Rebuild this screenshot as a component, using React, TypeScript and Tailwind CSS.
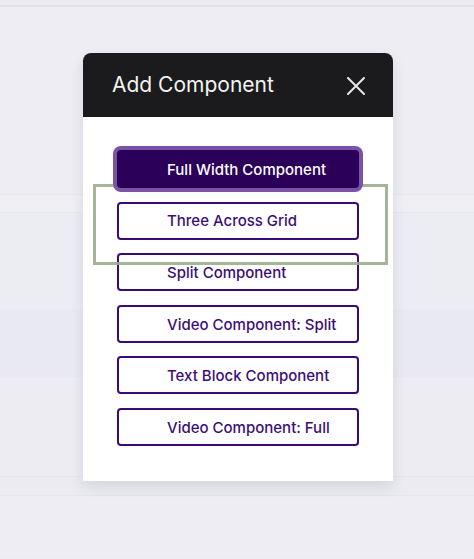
import React from 'react';

const items = [
  'Full Width Component',
  'Three Across Grid',
  'Split Component',
  'Video Component: Split',
  'Text Block Component',
  'Video Component: Full',
];

export default function App() {
  return (
    <div
      className="relative h-[559px] w-full overflow-hidden bg-[#ececf2]"
      style={{ fontFamily: 'Inter, "Noto Sans", sans-serif' }}
    >
      {/* page behind the overlay */}
      <div className="flex flex-col">
        <div className="h-[5px]" />
        <div className="h-[2px] bg-[#e0e0e8]" />
        <div className="h-[187px] bg-[#ededf3]" />
        <div className="h-[19px] border-y border-[#e6e6ed] bg-[#efeff4]" />
        <div className="h-[96px] bg-[#ececf3]" />
        <div className="h-[68px] bg-[#e8e9f1]" />
        <div className="h-[99px] bg-[#ececf2]" />
        <div className="h-[20px] border-y border-[#e5e5ec] bg-[#ebebf1]" />
        <div className="h-[62px] bg-[#ededf3]" />
      </div>

      {/* modal */}
      <div className="absolute left-[83px] top-[53px] w-[310px] rounded-t-[8px] bg-white shadow-[0_6px_14px_rgba(60,60,90,0.12)]">
        <div className="flex h-[64px] items-center justify-between rounded-t-[8px] bg-[#1b1b1d] pl-[29px] pr-[28px]">
          <h2 className="text-[21px] font-normal text-[#f3f3f3]">Add Component</h2>
          <svg width="18" height="18" viewBox="0 0 18 18" className="mt-[1px]">
            <path d="M1 1 L17 17 M17 1 L1 17" stroke="#e8e8e8" strokeWidth="2" strokeLinecap="round" />
          </svg>
        </div>
        <div className="relative flex flex-col gap-[13.6px] px-[34px] pb-[35px] pt-[33px]">
          <div className="pointer-events-none absolute left-[10px] top-[67px] z-10 h-[81px] w-[295px] border-[3px] border-[#9aae8b] opacity-90" />
          {items.map((label, i) =>
            i === 0 ? (
              <button
                key={label}
                className="relative z-20 flex h-[38px] items-center rounded-[4px] bg-[#2a0059] pl-[50px] pt-[2px] text-[15px] font-medium text-white ring-4 ring-[#7a52a6]"
              >
                {label}
              </button>
            ) : (
              <button
                key={label}
                className="flex h-[38px] items-center rounded-[4px] border-2 border-[#3a0a76] bg-white pl-[48px] pt-[2px] text-[15px] font-medium text-[#3b0e78]"
              >
                {label}
              </button>
            )
          )}
        </div>
      </div>
    </div>
  );
}
